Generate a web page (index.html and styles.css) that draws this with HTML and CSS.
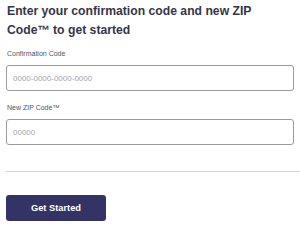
FILE: index.html
```html
<!DOCTYPE html>
<html lang="en">

<head>
    <meta charset="UTF-8">
    <meta name="viewport" content="width=device-width, initial-scale=1.0">
    <title>Get Started</title>
    <link rel="stylesheet" href="styles.css">
</head>

<body>
    <div class="start_form">
        <h1 class="title">Enter your confirmation code and new ZIP Code&trade; to get started</h1>

        <div class="field">
            <label class="field_label" for="code">Confirmation Code</label>
            <input class="field_input" id="code" type="text" placeholder="0000-0000-0000-0000">
        </div>

        <div class="field">
            <label class="field_label" for="zip">New ZIP Code&trade;</label>
            <input class="field_input" id="zip" type="text" placeholder="00000">
        </div>

        <hr class="divider">

        <button class="btn_start" type="button">Get Started</button>
    </div>
</body>

</html>
```

FILE: styles.css
```css
* {
    margin: 0;
    padding: 0;
    box-sizing: border-box;
}

body {
    font-family: "Liberation Sans", Arial, sans-serif;
    background: #fff;
    color: #333;
}

.start_form {
    display: flex;
    flex-direction: column;
    align-items: flex-start;
    padding: 2px 6px 0 6px;
}

.title {
    font-size: 12.2px;
    line-height: 19px;
    font-weight: bold;
    color: #35354a;
    padding-left: 1px;
    width: 270px;
}

.field {
    display: flex;
    flex-direction: column;
    gap: 6px;
    width: 100%;
    margin-top: 9px;
}

.field + .field {
    margin-top: 12px;
}

.field_label {
    font-size: 7px;
    line-height: 10px;
    color: #555;
    padding-left: 1px;
}

.field_input {
    width: 288px;
    height: 26px;
    border: 1px solid #9a9a9a;
    border-radius: 3px;
    padding: 0 6px;
    font-family: "Liberation Sans", Arial, sans-serif;
    font-size: 8px;
    color: #333;
    outline: none;
}

.field_input::placeholder {
    color: #a3a3ad;
}

.divider {
    border: none;
    border-top: 1px solid #d4d4d4;
    width: 294px;
    margin-top: 26px;
}

.btn_start {
    width: 100px;
    height: 26px;
    margin-top: 23px;
    background: #333366;
    color: #fff;
    border: none;
    border-radius: 3px;
    font-family: "Liberation Sans", Arial, sans-serif;
    font-size: 9.3px;
    font-weight: bold;
    cursor: pointer;
}
```
